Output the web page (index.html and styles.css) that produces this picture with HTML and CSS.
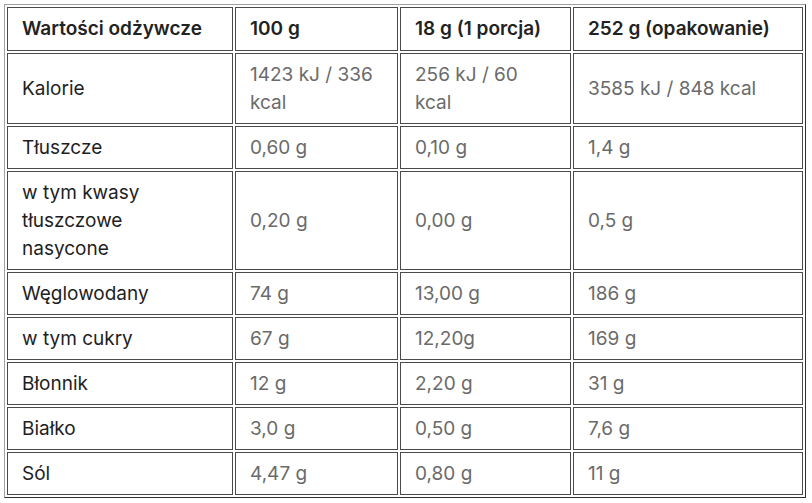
FILE: index.html
```html
<!DOCTYPE html>
<html lang="pl">
<head>
<meta charset="utf-8">
<link rel="stylesheet" href="styles.css">
</head>
<body>
<div class="wrap">
<table class="nutri">
  <thead>
    <tr>
      <th class="c1">Wartości odżywcze</th>
      <th class="c2">100 g</th>
      <th class="c3">18 g (1 porcja)</th>
      <th class="c4">252 g (opakowanie)</th>
    </tr>
  </thead>
  <tbody>
    <tr><td class="name">Kalorie</td><td>1423 kJ / 336 kcal</td><td>256 kJ / 60 kcal</td><td>3585 kJ / 848 kcal</td></tr>
    <tr><td class="name">Tłuszcze</td><td>0,60 g</td><td>0,10 g</td><td>1,4 g</td></tr>
    <tr><td class="name">w tym kwasy<br>tłuszczowe<br>nasycone</td><td>0,20 g</td><td>0,00 g</td><td>0,5 g</td></tr>
    <tr><td class="name">Węglowodany</td><td>74 g</td><td>13,00 g</td><td>186 g</td></tr>
    <tr><td class="name">w tym cukry</td><td>67 g</td><td>12,20g</td><td>169 g</td></tr>
    <tr><td class="name">Błonnik</td><td>12 g</td><td>2,20 g</td><td>31 g</td></tr>
    <tr><td class="name">Białko</td><td>3,0 g</td><td>0,50 g</td><td>7,6 g</td></tr>
    <tr><td class="name">Sól</td><td>4,47 g</td><td>0,80 g</td><td>11 g</td></tr>
  </tbody>
</table>
</div>
</body>
</html>
```
FILE: styles.css
```css
html, body {
  margin: 0;
  padding: 0;
  background: #ffffff;
}

.wrap {
  padding: 4px;
}

.nutri {
  width: 802px;
  table-layout: fixed;
  border-collapse: separate;
  border-spacing: 2px;
  border: 1px solid;
  border-color: #a0a0a0 #2e2e2e #2e2e2e #a0a0a0;
  font-family: Inter, "Noto Sans", sans-serif;
  font-size: 19px;
  line-height: 28px;
  color: #6a6a6a;
}

.nutri th,
.nutri td {
  box-sizing: border-box;
  border: 1px solid #4a4a4a;
  padding: 7px 14px 6px;
  text-align: left;
  vertical-align: middle;
}

.nutri th {
  font-weight: 600;
  color: #222222;
  padding: 7px 14px 7px;
}

.nutri .c1 { width: 226px; }
.nutri .c2 { width: 163px; }
.nutri .c3 { width: 171px; }
.nutri .c4 { width: 230px; }

.nutri td.name {
  color: #1e1e1e;
}
```
